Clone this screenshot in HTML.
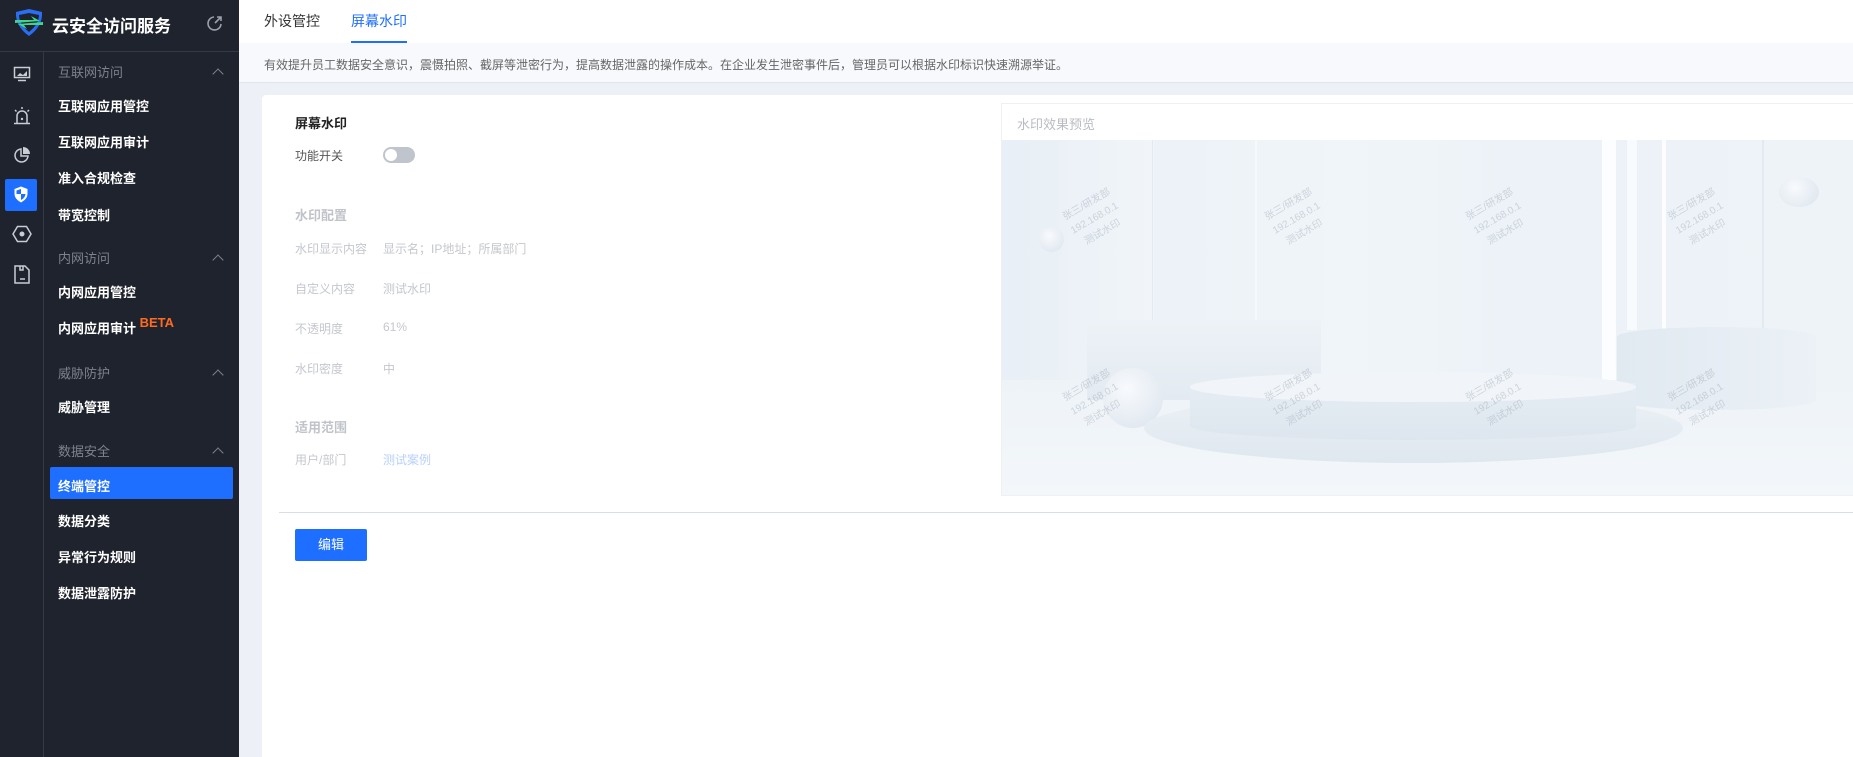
<!DOCTYPE html>
<html><head><meta charset="utf-8">
<style>
*{margin:0;padding:0;box-sizing:border-box}
html,body{width:1853px;height:757px;overflow:hidden}
body{font-family:"Liberation Sans","Noto Sans CJK SC",sans-serif;background:#edf0f7;position:relative}
.abs{position:absolute}
#side{left:0;top:0;width:239px;height:757px;background:#1f232d}
#side .hd{height:52px;border-bottom:1px solid #333a47}
#rail{left:0;top:52px;width:44px;height:705px;border-right:1px solid #333a47}
.m{position:absolute;left:58px;font-size:13px;color:#fff;font-weight:bold;white-space:nowrap}
.g{position:absolute;left:58px;font-size:13px;color:#7d828c;white-space:nowrap}
.car{position:absolute;left:214px;width:8px;height:8px;border-left:1.5px solid #7d828c;border-top:1.5px solid #7d828c;transform:rotate(45deg)}
.lab{position:absolute;left:295px;font-size:12px;color:#c4c7cd}
.val{position:absolute;left:383px;font-size:12px;color:#c4c7cd}
.wm{position:absolute;width:90px;text-align:center;font-size:10px;line-height:16px;color:rgba(150,160,175,.4);transform:rotate(-30deg)}
</style></head><body>
<div id="side" class="abs">
  <div class="hd abs" style="left:0;top:0;width:239px"></div>
  <svg class="abs" style="left:12px;top:9px" width="34" height="28" viewBox="0 0 34 28">
    <path d="M4 3 L17 0 L30 3 Q31 17 17 27 Q3 17 4 3Z" fill="#2a6ef5"/>
    <path d="M7 6 L17 4 L27 6 Q27 15 17 23 Q7 15 7 6Z" fill="#1f232d"/>
    <path d="M3 11 L22 11 L19 7 L28 12 L3 14Z" fill="#3dd68c"/>
    <path d="M31 16 L12 16 L15 20 L6 15 L31 13Z" fill="#3dd68c"/>
  </svg>
  <div class="abs" style="left:52px;top:12px;font-size:17px;color:#fff;font-weight:bold">云安全访问服务</div>
  <svg class="abs" style="left:206px;top:14px" width="18" height="18" viewBox="0 0 18 18"><path d="M8 3 A6.5 6.5 0 1 0 15 10" fill="none" stroke="#9aa0aa" stroke-width="1.6"/><path d="M9 9 L15 3 M11 3 H15 V7" fill="none" stroke="#9aa0aa" stroke-width="1.6"/></svg>
  <div id="rail" class="abs"></div>
  <svg class="abs" style="left:13px;top:66px" width="18" height="16" viewBox="0 0 18 16"><rect x="1.5" y="1.5" width="15" height="10" fill="none" stroke="#c8ccd3" stroke-width="1.5"/><path d="M4 10 L7 7 L10 9 L14 5 V10Z" fill="#c8ccd3"/><path d="M5 14.5 H13" stroke="#c8ccd3" stroke-width="1.5"/></svg>
  <svg class="abs" style="left:12px;top:106px" width="20" height="20" viewBox="0 0 20 20"><path d="M5 17 V10 A5 5 0 0 1 15 10 V17 M2 17.5 H18 M10 1 V3 M3 4 L4.5 5.5 M17 4 L15.5 5.5" fill="none" stroke="#c8ccd3" stroke-width="1.5"/><circle cx="10" cy="13" r="1.2" fill="#c8ccd3"/></svg>
  <svg class="abs" style="left:13px;top:146px" width="18" height="18" viewBox="0 0 18 18"><path d="M8 3 A6.5 6.5 0 1 0 15 10 H8Z" fill="none" stroke="#c8ccd3" stroke-width="1.5"/><path d="M10 1 A7 7 0 0 1 17 8 H10Z" fill="#c8ccd3"/></svg>
  <div class="abs" style="left:5px;top:179px;width:32px;height:32px;background:#1e6fff;border-radius:2px"></div>
  <svg class="abs" style="left:14px;top:186px" width="14" height="17" viewBox="0 0 14 17"><path d="M7 0.5 L13.5 3 V8 Q13.5 13 7 16.5 Q0.5 13 0.5 8 V3Z" fill="#fff"/><path d="M7 3 V8 H11.5 Q11 12 7 14 Z M7 8 H2.5 V4.5 L7 3Z" fill="#1e6fff"/></svg>
  <svg class="abs" style="left:12px;top:225px" width="20" height="18" viewBox="0 0 20 18"><path d="M5.5 1.5 H14.5 L19 9 L14.5 16.5 H5.5 L1 9Z" fill="none" stroke="#c8ccd3" stroke-width="1.5"/><circle cx="10" cy="9" r="2.5" fill="#c8ccd3"/></svg>
  <svg class="abs" style="left:14px;top:265px" width="16" height="19" viewBox="0 0 16 19"><path d="M1 1 H11 L15 5 V18 H1Z" fill="none" stroke="#c8ccd3" stroke-width="1.5"/><path d="M6 1 V5 H9 V1 M6 14 H11" stroke="#c8ccd3" stroke-width="1.5" fill="none"/></svg>

  <div class="g" style="top:62px">互联网访问</div><div class="car" style="top:70px"></div>
  <div class="m" style="top:96px">互联网应用管控</div>
  <div class="m" style="top:132px">互联网应用审计</div>
  <div class="m" style="top:168px">准入合规检查</div>
  <div class="m" style="top:205px">带宽控制</div>
  <div class="g" style="top:248px">内网访问</div><div class="car" style="top:256px"></div>
  <div class="m" style="top:282px">内网应用管控</div>
  <div class="m" style="top:318px">内网应用审计 <span style="color:#ff6a21;position:relative;top:-6px">BETA</span></div>
  <div class="g" style="top:363px">威胁防护</div><div class="car" style="top:371px"></div>
  <div class="m" style="top:397px">威胁管理</div>
  <div class="g" style="top:441px">数据安全</div><div class="car" style="top:449px"></div>
  <div class="abs" style="left:50px;top:467px;width:183px;height:32px;background:#1e6fff;border-radius:2px"></div>
  <div class="m" style="top:476px">终端管控</div>
  <div class="m" style="top:511px">数据分类</div>
  <div class="m" style="top:547px">异常行为规则</div>
  <div class="m" style="top:583px">数据泄露防护</div>
</div>

<div class="abs" style="left:239px;top:0;width:1614px;height:43px;background:#fff"></div>
<div class="abs" style="left:264px;top:11px;font-size:14px;color:#333">外设管控</div>
<div class="abs" style="left:351px;top:11px;font-size:14px;color:#1e6fff">屏幕水印</div>
<div class="abs" style="left:351px;top:41px;width:56px;height:2px;background:#1e6fff"></div>
<div class="abs" style="left:239px;top:43px;width:1614px;height:40px;background:#f7f9fc;border-bottom:1px solid #e1e5ec"></div>
<div class="abs" style="left:264px;top:56px;font-size:12px;color:#666">有效提升员工数据安全意识，震慑拍照、截屏等泄密行为，提高数据泄露的操作成本。在企业发生泄密事件后，管理员可以根据水印标识快速溯源举证。</div>

<div class="abs" style="left:262px;top:95px;width:1591px;height:662px;background:#fff;border-radius:4px 0 0 0"></div>
<div class="abs" style="left:295px;top:113px;font-size:13px;color:#222;font-weight:bold">屏幕水印</div>
<div class="abs" style="left:295px;top:147px;font-size:12px;color:#555">功能开关</div>
<div class="abs" style="left:383px;top:147px;width:32px;height:16px;border-radius:8px;background:#c0c4cc"><div class="abs" style="left:2px;top:2px;width:12px;height:12px;border-radius:6px;background:#fff"></div></div>
<div class="abs" style="left:295px;top:205px;font-size:13px;color:#c0c3c9;font-weight:bold">水印配置</div>
<div class="lab" style="top:240px">水印显示内容</div><div class="val" style="top:240px">显示名；IP地址；所属部门</div>
<div class="lab" style="top:280px">自定义内容</div><div class="val" style="top:280px">测试水印</div>
<div class="lab" style="top:320px">不透明度</div><div class="val" style="top:320px">61%</div>
<div class="lab" style="top:360px">水印密度</div><div class="val" style="top:360px">中</div>
<div class="abs" style="left:295px;top:417px;font-size:13px;color:#c0c3c9;font-weight:bold">适用范围</div>
<div class="lab" style="top:451px">用户/部门</div><div class="val" style="top:451px;color:#b8d0f8">测试案例</div>

<div class="abs" style="left:1001px;top:103px;width:860px;height:393px;border:1px solid #eef0f3;background:#fff"></div>
<div class="abs" style="left:1017px;top:114px;font-size:13px;color:#b8bcc2">水印效果预览</div>
<div class="abs" style="left:1002px;top:140px;width:860px;height:355px;overflow:hidden;background:linear-gradient(90deg,#e8eff6,#f0f5f9 40%,#ecf2f7 60%,#eef3f8)">
  <div class="abs" style="left:57px;top:0;width:95px;height:240px;background:linear-gradient(90deg,#ebf1f7,#f1f5f9)"></div>
  <div class="abs" style="left:150px;top:0;width:1px;height:240px;background:#e2e9f0"></div>
  <div class="abs" style="left:253px;top:0;width:2px;height:240px;background:#f6f9fb"></div>
  <div class="abs" style="left:600px;top:0;width:14px;height:240px;background:#fbfdff"></div>
  <div class="abs" style="left:625px;top:0;width:10px;height:190px;background:#f8fbfd"></div>
  <div class="abs" style="left:660px;top:0;width:4px;height:240px;background:#fbfdff"></div>
  <div class="abs" style="left:760px;top:0;width:2px;height:240px;background:#e2e9f0"></div>
  <div class="abs" style="left:0;top:240px;width:860px;height:115px;background:linear-gradient(#eef3f8,#f3f7fa)"></div>
  <div class="abs" style="left:85px;top:180px;width:234px;height:80px;background:linear-gradient(#edf2f7,#e3eaf1)"></div>
  <div class="abs" style="left:615px;top:187px;width:199px;height:83px;background:linear-gradient(90deg,#e1e9f1,#ebf1f6);border-radius:50%/10px"></div>
  <div class="abs" style="left:101px;top:228px;width:60px;height:60px;border-radius:50%;background:radial-gradient(circle at 40% 35%,#f8fafd,#dae3ec)"></div>
  <div class="abs" style="left:37px;top:87px;width:25px;height:25px;border-radius:50%;background:radial-gradient(circle at 40% 35%,#f8fafd,#dae3ec)"></div>
  <div class="abs" style="left:777px;top:37px;width:40px;height:30px;border-radius:50%;background:radial-gradient(circle at 40% 35%,#f8fafd,#dae3ec)"></div>
  <div class="abs" style="left:142px;top:253px;width:539px;height:70px;border-radius:50%;background:linear-gradient(#ebf1f6,#dfe7ef)"></div>
  <div class="abs" style="left:188px;top:243px;width:446px;height:57px;border-radius:0 0 50% 50%/0 0 14px 14px;background:linear-gradient(#e6edf4,#dde6ee)"></div>
  <div class="abs" style="left:188px;top:232px;width:446px;height:30px;border-radius:50%;background:#f1f5f9"></div>
  <div class="wm" style="left:48px;top:55px">张三/研发部<br>192.168.0.1<br>测试水印</div>
  <div class="wm" style="left:250px;top:55px">张三/研发部<br>192.168.0.1<br>测试水印</div>
  <div class="wm" style="left:451px;top:55px">张三/研发部<br>192.168.0.1<br>测试水印</div>
  <div class="wm" style="left:653px;top:55px">张三/研发部<br>192.168.0.1<br>测试水印</div>
  <div class="wm" style="left:48px;top:236px">张三/研发部<br>192.168.0.1<br>测试水印</div>
  <div class="wm" style="left:250px;top:236px">张三/研发部<br>192.168.0.1<br>测试水印</div>
  <div class="wm" style="left:451px;top:236px">张三/研发部<br>192.168.0.1<br>测试水印</div>
  <div class="wm" style="left:653px;top:236px">张三/研发部<br>192.168.0.1<br>测试水印</div>
</div>

<div class="abs" style="left:279px;top:512px;width:1574px;height:1px;background:#d9dde4"></div>
<div class="abs" style="left:295px;top:529px;width:72px;height:32px;background:#1e6fff;border-radius:2px;color:#fff;font-size:13px;text-align:center;line-height:32px">编辑</div>
</body></html>
